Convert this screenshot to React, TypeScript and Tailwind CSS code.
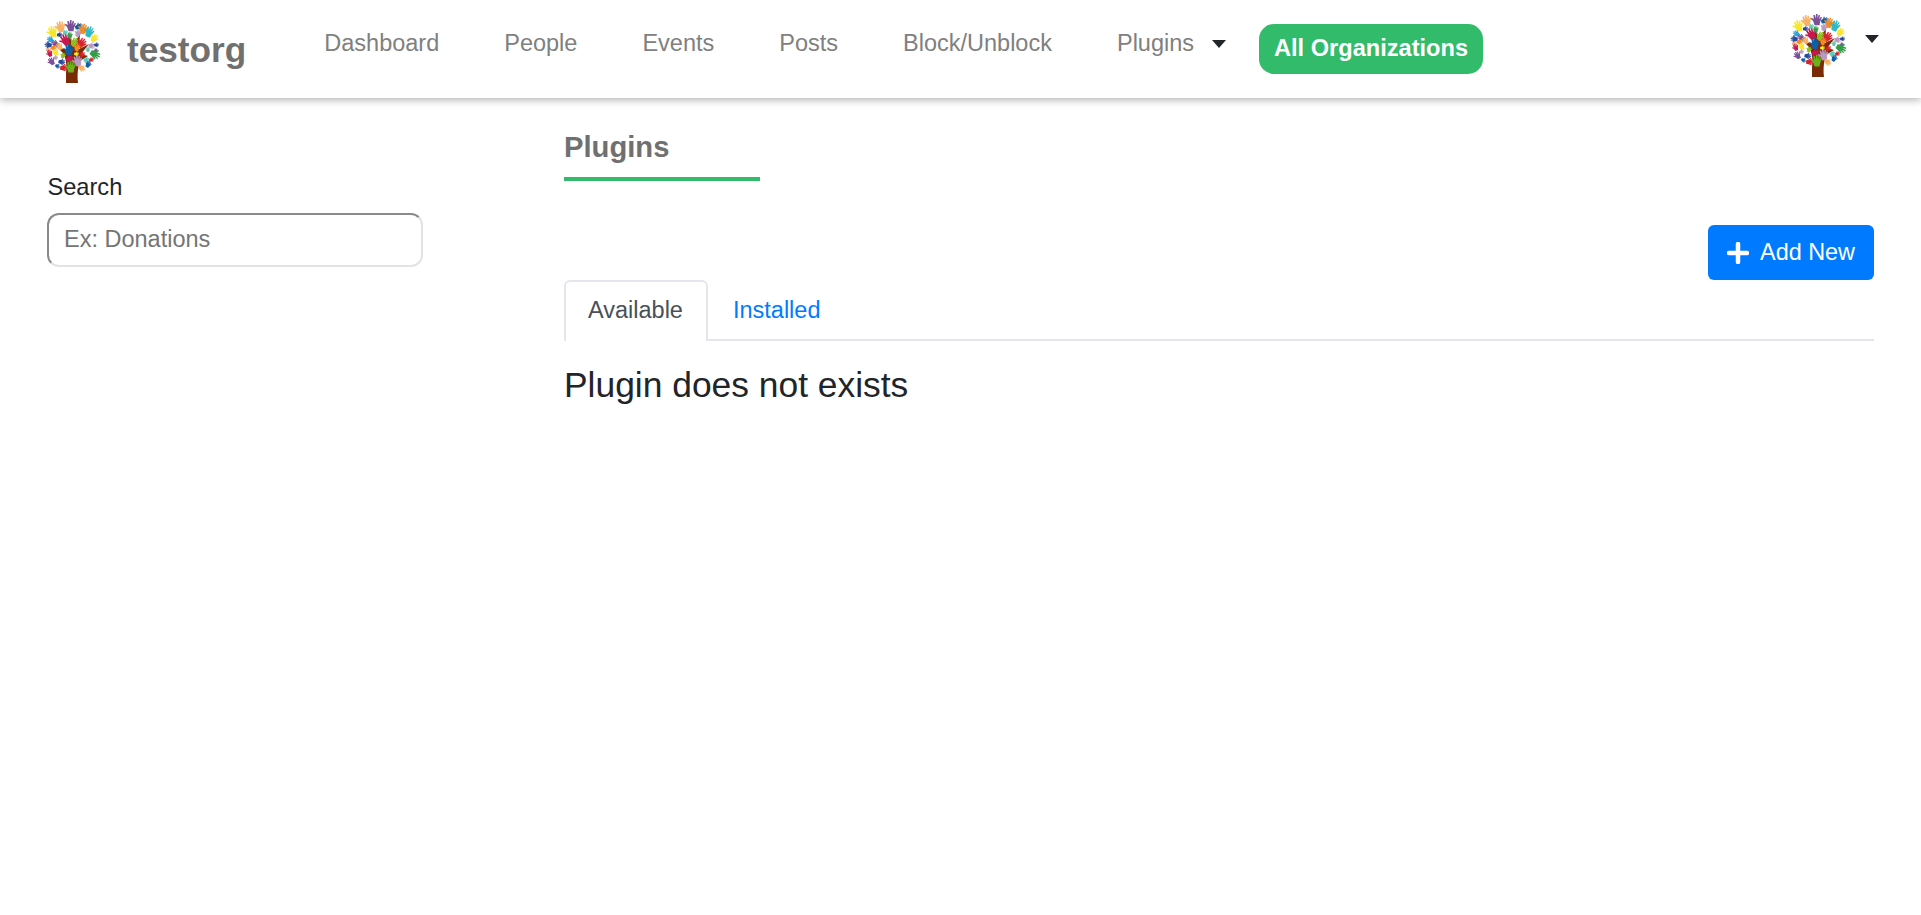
const HAND = "M-1.9 3.4 L-3.2 -0.2 L-5 -1.6 L-4.2 -2.6 L-2.6 -1.4 L-2.9 -4.8 L-1.7 -4.9 L-1.1 -2 L-0.8 -5.6 L0.4 -5.6 L0.5 -2 L1.3 -5 L2.4 -4.6 L1.7 -1.3 L3 -3.4 L3.9 -2.8 L2.5 0.6 L2 3.4 Z";

const hands: [number, number, number, number, string][] = [
  [17, 22, 1.25, -15, "#f7e62b"], [25, 17, 1.25, -10, "#f7b267"], [35, 16, 1.25, 0, "#7a4f96"], [42, 16, 0.85, 70, "#0d5fa8"],
  [47, 19, 1.15, 15, "#f58a1f"], [53, 22, 1.2, 20, "#2fb9c4"], [58, 28, 0.95, 40, "#f7e62b"], [15, 29, 0.8, -50, "#2fa6d9"],
  [13, 34, 0.8, -80, "#27499c"], [20, 33, 0.85, -60, "#7a4f96"], [23, 24, 0.6, 90, "#27499c"], [29, 22, 0.6, 60, "#5fc9b8"],
  [30, 30, 1.3, -25, "#c8174f"], [42, 23, 0.85, 20, "#b99ac2"], [34, 25, 0.7, 0, "#2f9e44"], [38, 32, 1, 30, "#8fbe1a"],
  [45, 33, 1.15, 40, "#d5232f"], [55, 35, 0.75, 90, "#b99ac2"], [60, 34, 0.55, 90, "#27499c"], [12, 39, 0.55, 100, "#f7a566"],
  [17, 37, 0.7, 110, "#f58a1f"], [24, 36, 0.85, -30, "#f7b267"], [20, 42, 0.8, -20, "#f7e62b"], [33, 40, 1.2, 0, "#0d5fa8"],
  [41, 37, 0.85, 10, "#f58a1f"], [52, 39, 0.6, 0, "#5fc9b8"], [60, 40, 0.5, 0, "#7a4f96"], [58, 43, 1.15, 120, "#2f9e44"],
  [14, 43, 0.75, -20, "#c8174f"], [19, 47, 0.55, 80, "#b99ac2"], [16, 51, 0.85, -30, "#7a4f96"], [25, 51, 0.75, 100, "#27499c"],
  [27, 45, 0.65, 20, "#8fbe1a"], [33, 48, 0.85, 70, "#c8174f"], [42, 51, 1.2, -10, "#b99ac2"], [50, 49, 0.7, 90, "#5fc9b8"],
  [55, 49, 0.55, 70, "#d5232f"], [21, 55, 0.55, 120, "#0d5fa8"], [27, 57, 0.85, 90, "#d5232f"], [35, 57, 1.3, 0, "#6cb01a"],
  [46, 44, 0.65, 45, "#d5232f"], [52, 54, 0.75, 30, "#0d5fa8"], [45, 57, 0.8, 120, "#f7b267"], [40, 43, 0.55, 90, "#f7e62b"],
];

function TreeLogo() {
  return (
    <svg width="75" height="75" viewBox="0 0 75 75" className="block shrink-0" aria-hidden="true">
      <path d="M30 72 L30 62 C31 54 30 48 27 42 L20 35 L31 39 L33 22 L37 36 L44 22 L43 38 L53 33 L45 43 L52 45 L44 50 C42 56 41 63 42 72 Z" fill="#7a2a05" />
      {hands.map(([x, y, s, r, c], i) => (
        <path key={i} d={HAND} fill={c} transform={`translate(${x} ${y}) rotate(${r}) scale(${s})`} />
      ))}
    </svg>
  );
}

function Caret() {
  return <span className="block w-0 h-0 border-x-[7px] border-x-transparent border-t-[8px] border-t-[#212529]" />;
}

const links: [string, string][] = [
  ["Dashboard", "ml-[78px]"],
  ["People", "ml-[65px]"],
  ["Events", "ml-[65px]"],
  ["Posts", "ml-[65px]"],
  ["Block/Unblock", "ml-[65px]"],
  ["Plugins", "ml-[65px]"],
];

export default function App() {
  return (
    <div className="min-h-[915px] bg-white font-['Liberation_Sans',Arial,sans-serif] text-[#212529]">
      <header className="flex h-[98px] items-center bg-white shadow-[0_2px_8px_rgba(0,0,0,0.3)] pl-[36px] pr-[42px]">
        <div className="mt-[-2px]"><TreeLogo /></div>
        <span className="ml-[16px] text-[35.2px] font-bold leading-none text-[#707070] mt-[2px]">testorg</span>
        {links.map(([l, m]) => (
          <a key={l} className={`${m} text-[23.5px] leading-none text-[#808080] mt-[-10px]`}>{l}</a>
        ))}
        <span className="ml-[18px] mt-[-11px]"><Caret /></span>
        <button className="ml-[33px] h-[50px] w-[224px] rounded-[15px] bg-[#31bb6b] text-[23.6px] font-bold text-white">All Organizations</button>
        <div className="ml-auto mt-[-14px] flex items-start">
          <TreeLogo />
          <span className="ml-[8px] mt-[30px]"><Caret /></span>
        </div>
      </header>

      <main className="flex">
        <aside className="w-[564px] shrink-0 pl-[47px] pt-[75px]">
          <label className="block pl-[0.5px] text-[23.6px] leading-[28px] text-[#212529]">Search</label>
          <input
            placeholder="Ex: Donations"
            className="mt-[12px] block h-[54px] w-[376px] rounded-[12px] border-2 border-t-[#8a8a8a] border-l-[#8a8a8a] border-r-[#e3e3e3] border-b-[#e3e3e3] px-[15px] pb-[2px] text-[23.5px] placeholder:text-[#757575] outline-none"
          />
        </aside>

        <section className="flex-1 pr-[47px] pt-[31px]">
          <h2 className="w-[196px] border-b-4 border-[#31bb6b] pb-[12px] text-[29.2px] font-bold leading-[36px] text-[#707070]">Plugins</h2>
          <div className="mt-[44px] flex justify-end">
            <button className="flex h-[55px] w-[166px] items-center justify-center gap-[11px] rounded-[6px] bg-[#007bff] text-[23.4px] text-white">
              <svg width="22" height="22" viewBox="0 0 22 22" aria-hidden="true"><path d="M11 1v20M1 11h20" stroke="#fff" strokeWidth="5" strokeLinecap="round" transform="translate(1.1 1.1) scale(.9)" /></svg>
              Add New
            </button>
          </div>
          <nav className="flex h-[61px] border-b-2 border-[#e4e6ed]">
            <a className="h-[61px] rounded-t-[6px] border-2 border-b-0 border-[#e4e6ed] bg-white pl-[22px] pr-[23px] text-[23.5px] leading-[56px] text-[#495057]">Available</a>
            <a className="px-[25px] text-[23.5px] leading-[60px] text-[#007bff]">Installed</a>
          </nav>
          <h4 className="mt-[22px] text-[35.4px] font-normal leading-[44px]">Plugin does not exists</h4>
        </section>
      </main>
    </div>
  );
}
